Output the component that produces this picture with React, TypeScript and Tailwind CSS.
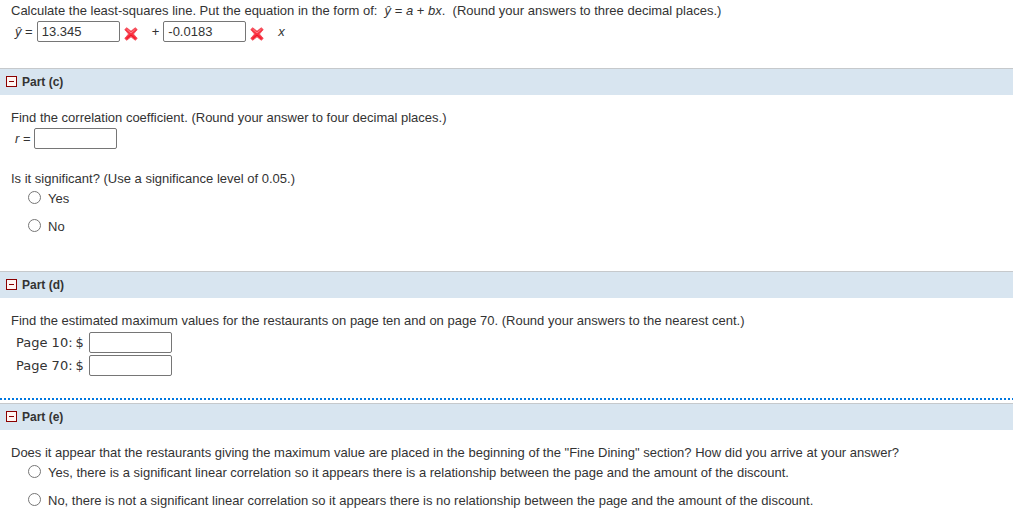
import React, { useState } from 'react';

const AnswerBox = ({ label, initial = '' }: { label: string; initial?: string }) => {
  const [value, setValue] = useState(initial);
  return (
    <input
      type="text"
      aria-label={label}
      value={value}
      onChange={(e) => setValue(e.target.value)}
      className="w-[83px] h-[21px] px-1 rounded-[2px] border border-[#767676] bg-white text-[13px] text-[#333333] outline-none"
    />
  );
};

const WrongMark = () => (
  <svg width="14" height="14" viewBox="0 0 14 14" role="img" aria-label="Incorrect">
    <path
      d="M2.8.8 7 4.3 11.2.8 13.2 2.6 9.4 7l3.8 4.4-2 1.8L7 9.7l-4.2 3.5-2-1.8L4.6 7 .8 2.6Z"
      fill="#fb3040"
      stroke="#f0505c"
      strokeWidth="1"
      strokeLinejoin="round"
    />
    <path d="M2.8 2.4 7 6l4.2-3.6" fill="none" stroke="#ff8089" strokeWidth="1" strokeLinecap="round" />
    <path d="M3 11.4 7 8l4 3.4" fill="none" stroke="#ee1528" strokeWidth="1" strokeLinecap="round" />
  </svg>
);

const PartHeader = ({ title }: { title: string }) => (
  <h2 className="flex items-center h-[27px] pl-[6px] gap-[5px] border-t border-[#c6c9cc] bg-[#d8e5f0] text-xs font-bold">
    <button type="button" aria-label={`Collapse ${title}`} className="flex items-center justify-center pb-px">
      <svg width="11" height="11" viewBox="0 0 11 11" shapeRendering="crispEdges">
        <rect x="0" y="0" width="11" height="11" fill="#8b0000" />
        <rect x="1" y="1" width="9" height="9" fill="#fff5f2" />
        <rect x="3" y="5" width="5" height="1" fill="#8b0000" />
      </svg>
    </button>
    {title}
  </h2>
);

interface ChoicesProps {
  name: string;
  options: string[];
}

const Choices = ({ name, options }: ChoicesProps) => (
  <div className="flex flex-col gap-2 pl-[17px]">
    {options.map((option) => (
      <label key={option} className="flex items-center gap-[7px]">
        <input
          type="radio"
          name={name}
          className="appearance-none shrink-0 w-[13px] h-[13px] mb-1 rounded-full border border-[#767676] bg-white checked:border-4 checked:border-[#0075ff]"
        />
        {option}
      </label>
    ))}
  </div>
);

const App: React.FC = () => {
  return (
    <main className="bg-white text-[13px] leading-[20px] text-[#333333] font-['Liberation_Sans',Arial,sans-serif]">
      {/* Least-squares line */}
      <section className="px-[11px] pt-px pb-[26px]">
        <p>
          Calculate the least-squares line. Put the equation in the form of: &nbsp;<i>ŷ</i> = <i>a</i> + <i>bx</i>. &nbsp;(Round your
          answers to three decimal places.)
        </p>
        <div className="flex items-center pl-1">
          <span className="mr-1"><i>ŷ</i> =</span>
          <AnswerBox label="Intercept a" initial="13.345" />
          <span className="ml-1 mt-1 mr-[14px]"><WrongMark /></span>
          <span className="mr-1">+</span>
          <AnswerBox label="Slope b" initial="-0.0183" />
          <span className="ml-1 mt-1 mr-[14px]"><WrongMark /></span>
          <i>x</i>
        </div>
      </section>

      <section>
        <PartHeader title="Part (c)" />
        <div className="px-[11px] pt-[13px] pb-[34px]">
          <p>Find the correlation coefficient. (Round your answer to four decimal places.)</p>
          <div className="flex items-center pl-1 mb-5">
            <span className="mr-[3px]"><i>r</i> =</span>
            <AnswerBox label="Correlation coefficient r" />
          </div>
          <p>Is it significant? (Use a significance level of 0.05.)</p>
          <Choices name="significant" options={['Yes', 'No']} />
        </div>
      </section>

      <section>
        <PartHeader title="Part (d)" />
        <div className="px-[11px] pt-[13px] pb-[22px]">
          <p>
            Find the estimated maximum values for the restaurants on page ten and on page 70. (Round your answers to the nearest cent.)
          </p>
          <div className="flex flex-col gap-[2px] pt-px pl-[5px]">
            {['Page 10:', 'Page 70:'].map((page) => (
              <div key={page} className="flex items-center">
                <span className="mr-[3px] font-['DejaVu_Sans',Verdana,sans-serif]">{page}</span>
                <span className="mr-[5px] font-['DejaVu_Sans',Verdana,sans-serif]">$</span>
                <AnswerBox label={`${page} maximum value in dollars`} />
              </div>
            ))}
          </div>
        </div>
      </section>

      <div className="h-[2px] mb-[3px] bg-[repeating-linear-gradient(90deg,#0077e0_0_2px,transparent_2px_4px)]" />

      <section>
        <PartHeader title="Part (e)" />
        <div className="px-[11px] pt-[13px] pb-5">
          <p>
            Does it appear that the restaurants giving the maximum value are placed in the beginning of the "Fine Dining" section? How
            did you arrive at your answer?
          </p>
          <Choices
            name="placement"
            options={[
              'Yes, there is a significant linear correlation so it appears there is a relationship between the page and the amount of the discount.',
              'No, there is not a significant linear correlation so it appears there is no relationship between the page and the amount of the discount.',
            ]}
          />
        </div>
      </section>
    </main>
  );
};

export default App;
